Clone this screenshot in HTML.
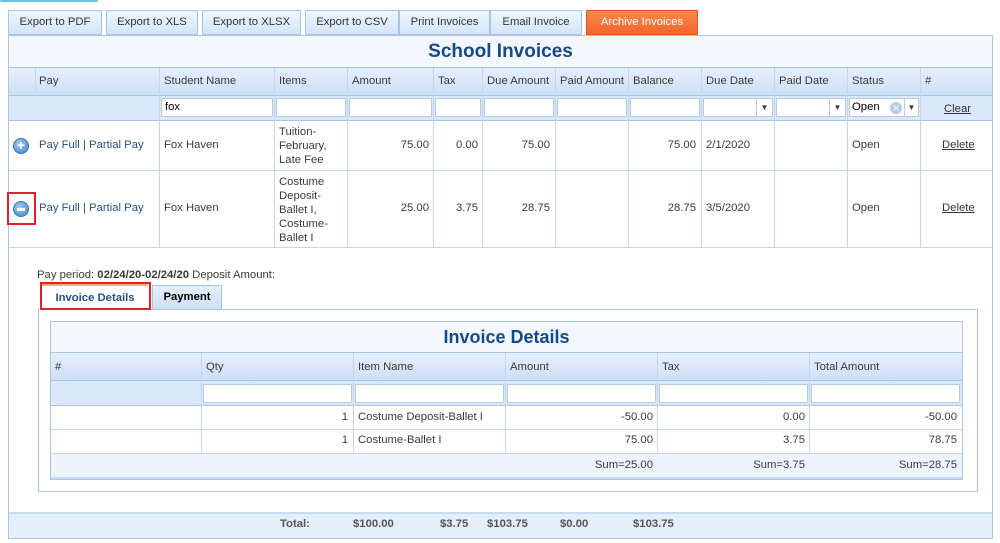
<!DOCTYPE html>
<html><head><style>
*{box-sizing:border-box;margin:0;padding:0}
body{width:1000px;height:543px;background:#fff;font-family:"Liberation Sans",sans-serif;font-size:11.3px;color:#3a3a3a;position:relative;overflow:hidden}
.a{position:absolute}
.tab{position:absolute;top:10px;height:25px;border:1px solid #a9c6e8;background:linear-gradient(#eef5fd,#d3e5fa);color:#333;text-align:center;line-height:23px}
.hd{background:linear-gradient(#e4effc,#cde0f7);border-bottom:1px solid #a9c6e8}
.vl{position:absolute;width:1px;background:#c2d7ef}
.hl{position:absolute;height:1px;background:#c2d7ef}
.inp{position:absolute;height:19px;background:#fff;border:1px solid #b5cbe6}
.t{position:absolute;white-space:nowrap}
.r{text-align:right}
u{color:#333}
</style></head><body>
<div class="a" style="left:0;top:0;width:98px;height:2px;background:#6cc3dc;border-radius:2px"></div>
<div class="tab" style="left:8px;width:94px">Export to PDF</div>
<div class="tab" style="left:106px;width:92px">Export to XLS</div>
<div class="tab" style="left:202px;width:99px">Export to XLSX</div>
<div class="tab" style="left:305px;width:94px">Export to CSV</div>
<div class="tab" style="left:399px;width:91px">Print Invoices</div>
<div class="tab" style="left:490px;width:92px">Email Invoice</div>
<div class="tab" style="left:586px;width:112px;background:linear-gradient(#ff8a4a,#f2632b);border-color:#e2582a;color:#fff">Archive Invoices</div>

<div class="a" style="left:8px;top:35px;width:985px;height:504px;border:1px solid #a9c6e8;background:#fff"></div>
<div class="a" style="left:9px;top:36px;width:983px;height:32px;background:#f4f8fd;border-bottom:1px solid #a9c6e8;text-align:center;font-weight:bold;font-size:19px;color:#154a8a;line-height:32px">School Invoices</div>
<div class="a hd" style="left:9px;top:68px;width:983px;height:28px"></div>
<div class="a" style="left:9px;top:96px;width:983px;height:25px;background:#d9e8fb;border-bottom:1px solid #a9c6e8"></div>
<div class="t" style="left:39px;top:75px">Pay</div>
<div class="t" style="left:164px;top:75px">Student Name</div>
<div class="t" style="left:279px;top:75px">Items</div>
<div class="t" style="left:352px;top:75px">Amount</div>
<div class="t" style="left:438px;top:75px">Tax</div>
<div class="t" style="left:487px;top:75px">Due Amount</div>
<div class="t" style="left:560px;top:75px">Paid Amount</div>
<div class="t" style="left:633px;top:75px">Balance</div>
<div class="t" style="left:706px;top:75px">Due Date</div>
<div class="t" style="left:779px;top:75px">Paid Date</div>
<div class="t" style="left:852px;top:75px">Status</div>
<div class="t" style="left:925px;top:75px">#</div>
<div class="vl" style="left:35px;top:68px;height:28px"></div>
<div class="vl" style="left:159px;top:68px;height:179px"></div>
<div class="vl" style="left:274px;top:68px;height:179px"></div>
<div class="vl" style="left:347px;top:68px;height:179px"></div>
<div class="vl" style="left:433px;top:68px;height:179px"></div>
<div class="vl" style="left:482px;top:68px;height:179px"></div>
<div class="vl" style="left:555px;top:68px;height:179px"></div>
<div class="vl" style="left:628px;top:68px;height:179px"></div>
<div class="vl" style="left:701px;top:68px;height:179px"></div>
<div class="vl" style="left:774px;top:68px;height:179px"></div>
<div class="vl" style="left:847px;top:68px;height:179px"></div>
<div class="vl" style="left:920px;top:68px;height:179px"></div>
<div class="inp" style="left:161px;top:98px;width:112px"><span style="position:absolute;left:3px;top:2px;color:#000">fox</span></div>
<div class="inp" style="left:276px;top:98px;width:70px"></div>
<div class="inp" style="left:349px;top:98px;width:83px"></div>
<div class="inp" style="left:435px;top:98px;width:46px"></div>
<div class="inp" style="left:484px;top:98px;width:70px"></div>
<div class="inp" style="left:557px;top:98px;width:70px"></div>
<div class="inp" style="left:630px;top:98px;width:70px"></div>
<div class="inp" style="left:703px;top:98px;width:70px"><span style="position:absolute;right:0;top:0;width:16px;height:17px;border-left:1px solid #b5cbe6;font-size:8px;text-align:center;line-height:17px">▼</span></div>
<div class="inp" style="left:776px;top:98px;width:70px"><span style="position:absolute;right:0;top:0;width:16px;height:17px;border-left:1px solid #b5cbe6;font-size:8px;text-align:center;line-height:17px">▼</span></div>
<div class="inp" style="left:849px;top:98px;width:70px"><span style="position:absolute;left:2px;top:2px;color:#000">Open</span><span style="position:absolute;left:40px;top:3px;width:12px;height:12px;border-radius:50%;background:#b9cbe3;color:#fff;font-size:9px;text-align:center;line-height:12px">✕</span><span style="position:absolute;right:0;top:0;width:14px;height:17px;border-left:1px solid #b5cbe6;font-size:8px;text-align:center;line-height:17px">▼</span></div>
<div class="t" style="left:944px;top:103px"><u>Clear</u></div>
<div class="hl" style="left:9px;top:170px;width:983px"></div>
<div class="hl" style="left:9px;top:247px;width:983px"></div>
<div class="a" style="left:13px;top:138px;width:16px;height:16px;border-radius:50%;background:radial-gradient(circle at 40% 35%,#a6cdf0,#3f82c9);border:1px solid #3a73b3;color:#fff;font-weight:bold;text-align:center;line-height:13px;font-size:14px">+</div>
<div class="t" style="left:39px;top:139px;color:#2a4f7f">Pay Full | Partial Pay</div>
<div class="t" style="left:164px;top:139px">Fox Haven</div>
<div class="t" style="left:279px;top:125px;line-height:14px">Tuition-<br>February,<br>Late Fee</div>
<div class="t r" style="left:347px;width:82px;top:139px">75.00</div>
<div class="t r" style="left:433px;width:45px;top:139px">0.00</div>
<div class="t r" style="left:482px;width:68px;top:139px">75.00</div>
<div class="t r" style="left:628px;width:68px;top:139px">75.00</div>
<div class="t" style="left:706px;top:139px">2/1/2020</div>
<div class="t" style="left:852px;top:139px">Open</div>
<div class="t" style="left:942px;top:139px"><u>Delete</u></div>

<div class="a" style="left:7px;top:192px;width:29px;height:33px;border:2px solid #e0202a"></div>
<div class="a" style="left:13px;top:201px;width:16px;height:16px;border-radius:50%;background:radial-gradient(circle at 40% 35%,#a6cdf0,#3f82c9);border:1px solid #3a73b3"><div style="position:absolute;left:3px;top:6px;width:8px;height:3px;background:#fff"></div></div>
<div class="t" style="left:39px;top:202px;color:#2a4f7f">Pay Full | Partial Pay</div>
<div class="t" style="left:164px;top:202px">Fox Haven</div>
<div class="t" style="left:279px;top:175px;line-height:14px">Costume<br>Deposit-<br>Ballet I,<br>Costume-<br>Ballet I</div>
<div class="t r" style="left:347px;width:82px;top:202px">25.00</div>
<div class="t r" style="left:433px;width:45px;top:202px">3.75</div>
<div class="t r" style="left:482px;width:68px;top:202px">28.75</div>
<div class="t r" style="left:628px;width:68px;top:202px">28.75</div>
<div class="t" style="left:706px;top:202px">3/5/2020</div>
<div class="t" style="left:852px;top:202px">Open</div>
<div class="t" style="left:942px;top:202px"><u>Delete</u></div>

<div class="t" style="left:37px;top:269px">Pay period: <b>02/24/20-02/24/20</b> Deposit Amount:</div>
<div class="a" style="left:152px;top:285px;width:70px;height:25px;background:linear-gradient(#e4effc,#cde0f7);border:1px solid #a9c6e8;font-weight:bold;color:#000;text-align:center;line-height:23px">Payment</div>
<div class="a" style="left:38px;top:309px;width:940px;height:183px;border:1px solid #a9c6e8"></div>
<div class="a" style="left:42px;top:284px;width:106px;height:26px;background:#fff;border-top:2px solid #f2b06a;text-align:center;font-weight:bold;color:#2a4f7f;line-height:24px">Invoice Details</div>
<div class="a" style="left:40px;top:282px;width:111px;height:28px;border:2px solid #e0202a"></div>

<div class="a" style="left:50px;top:321px;width:913px;height:159px;border:1px solid #a9c6e8;background:#fff"></div>
<div class="a" style="left:51px;top:322px;width:911px;height:31px;background:#f4f8fd;border-bottom:1px solid #a9c6e8;text-align:center;font-weight:bold;font-size:18px;color:#154a8a;line-height:31px">Invoice Details</div>
<div class="a hd" style="left:51px;top:353px;width:911px;height:28px"></div>
<div class="a" style="left:51px;top:381px;width:911px;height:25px;background:#d9e8fb;border-bottom:1px solid #a9c6e8"></div>
<div class="t" style="left:55px;top:361px">#</div>
<div class="t" style="left:206px;top:361px">Qty</div>
<div class="t" style="left:358px;top:361px">Item Name</div>
<div class="t" style="left:510px;top:361px">Amount</div>
<div class="t" style="left:662px;top:361px">Tax</div>
<div class="t" style="left:814px;top:361px">Total Amount</div>
<div class="vl" style="left:201px;top:353px;height:100px"></div>
<div class="vl" style="left:353px;top:353px;height:100px"></div>
<div class="vl" style="left:505px;top:353px;height:100px"></div>
<div class="vl" style="left:657px;top:353px;height:100px"></div>
<div class="vl" style="left:809px;top:353px;height:100px"></div>
<div class="inp" style="left:203px;top:384px;width:149px"></div>
<div class="inp" style="left:355px;top:384px;width:149px"></div>
<div class="inp" style="left:507px;top:384px;width:149px"></div>
<div class="inp" style="left:659px;top:384px;width:149px"></div>
<div class="inp" style="left:811px;top:384px;width:149px"></div>
<div class="hl" style="left:51px;top:429px;width:911px"></div>
<div class="a" style="left:51px;top:453px;width:911px;height:26px;background:#edf3fc;border-top:1px solid #c2d7ef;border-bottom:2px solid #c9dbf2"></div>
<div class="t r" style="left:201px;width:147px;top:411px">1</div>
<div class="t" style="left:358px;top:411px">Costume Deposit-Ballet I</div>
<div class="t r" style="left:505px;width:148px;top:411px">-50.00</div>
<div class="t r" style="left:657px;width:148px;top:411px">0.00</div>
<div class="t r" style="left:809px;width:148px;top:411px">-50.00</div>
<div class="t r" style="left:201px;width:147px;top:434px">1</div>
<div class="t" style="left:358px;top:434px">Costume-Ballet I</div>
<div class="t r" style="left:505px;width:148px;top:434px">75.00</div>
<div class="t r" style="left:657px;width:148px;top:434px">3.75</div>
<div class="t r" style="left:809px;width:148px;top:434px">78.75</div>
<div class="t r" style="left:505px;width:148px;top:459px">Sum=25.00</div>
<div class="t r" style="left:657px;width:148px;top:459px">Sum=3.75</div>
<div class="t r" style="left:809px;width:148px;top:459px">Sum=28.75</div>

<div class="a" style="left:9px;top:512px;width:983px;height:26px;background:#e4eefb;border-top:2px solid #c9dbf2"></div>
<div class="t" style="left:280px;top:518px;font-weight:bold;color:#555">Total:</div>
<div class="t" style="left:353px;top:518px;font-weight:bold;color:#555">$100.00</div>
<div class="t" style="left:440px;top:518px;font-weight:bold;color:#555">$3.75</div>
<div class="t" style="left:487px;top:518px;font-weight:bold;color:#555">$103.75</div>
<div class="t" style="left:560px;top:518px;font-weight:bold;color:#555">$0.00</div>
<div class="t" style="left:633px;top:518px;font-weight:bold;color:#555">$103.75</div>
</body></html>
